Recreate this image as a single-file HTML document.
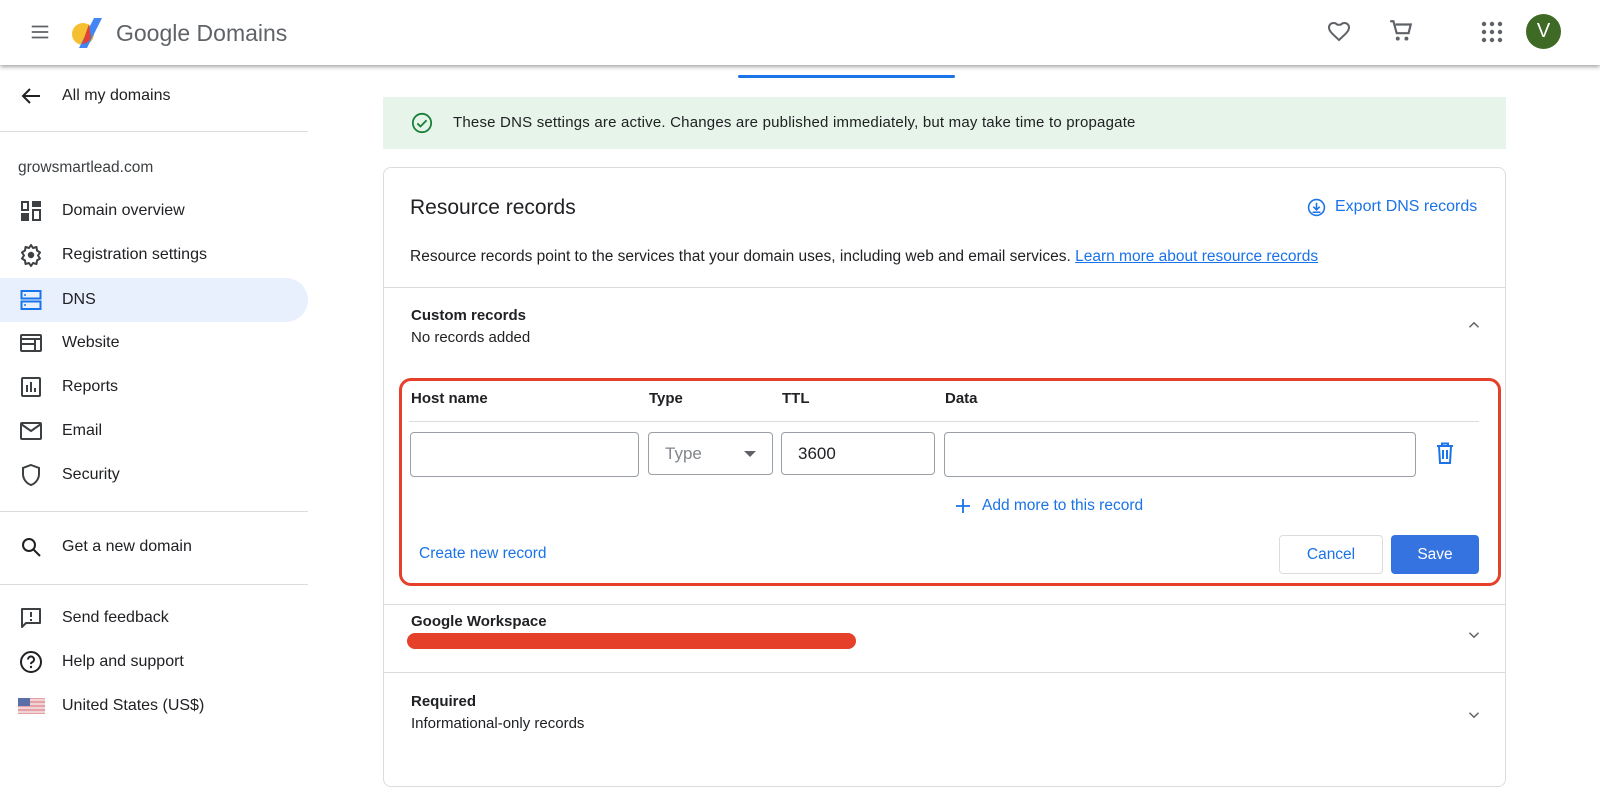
<!DOCTYPE html>
<html><head><meta charset="utf-8"><style>
*{box-sizing:border-box;margin:0;padding:0}
body{width:1600px;height:755px;overflow:hidden;background:#fff;font-family:"Liberation Sans",Arial,sans-serif;color:#202124;position:relative}
.abs{position:absolute}
.top{left:0;top:0;width:1600px;height:65px;background:#fff;box-shadow:0 2px 4px rgba(0,0,0,.35);z-index:5}
.nav{left:0;width:308px;height:44px;display:flex;align-items:center;font-size:16px;color:#202124}
.nav svg{position:absolute;left:19px}
.nav span{position:absolute;left:62px}
.hr{height:1px;background:#dadce0}
.blue{color:#1a73e8}
.inp{position:absolute;top:432px;height:45px;border:1px solid #9aa0a6;border-radius:4px;font-size:17px;display:flex;align-items:center;padding-left:16px}
.th{position:absolute;top:390px;font-size:15px;font-weight:bold}
.sec{font-size:15px;font-weight:bold;position:absolute;left:411px}
.sub{font-size:15px;position:absolute;left:411px}
</style></head><body>
<div class="abs top">
  <svg class="abs" style="left:29px;top:21px" width="22" height="22" viewBox="0 0 24 24"><path d="M3 6h18M3 12h18M3 18h18" stroke="#5f6368" stroke-width="2"/></svg>
  <svg class="abs" style="left:70px;top:16px" width="38" height="34" viewBox="0 0 38 34"><circle cx="13" cy="18" r="11" fill="#f6bf32"/><path d="M24 2h8L17 32H9z" fill="#4285f4"/><path d="M19 8L12 28a11 11 0 0 0 9-6z" fill="#db4437"/></svg>
  <div class="abs" style="left:116px;top:20px;font-size:23px;color:#5f6368">Google Domains</div>
  <svg class="abs" style="left:1326px;top:20px" width="26" height="24" viewBox="0 0 24 24"><path d="M12 20l-1.4-1.3C5.4 14 2 11 2 7.5 2 4.9 4 3 6.5 3c1.5 0 3 .7 3.9 1.8h3.2C14.5 3.7 16 3 17.5 3 20 3 22 4.9 22 7.5c0 3.5-3.4 6.5-8.6 11.2z" fill="none" stroke="#5f6368" stroke-width="2"/></svg>
  <svg class="abs" style="left:1388px;top:18px" width="26" height="26" viewBox="0 0 24 24"><path d="M2 3h3l3 11h11l2-8H7" fill="none" stroke="#5f6368" stroke-width="2"/><circle cx="9" cy="19" r="1.8" fill="#5f6368"/><circle cx="17" cy="19" r="1.8" fill="#5f6368"/></svg>
  <svg class="abs" style="left:1481px;top:21px" width="22" height="22" viewBox="0 0 22 22" fill="#5f6368"><circle cx="3" cy="3" r="2.2"/><circle cx="11" cy="3" r="2.2"/><circle cx="19" cy="3" r="2.2"/><circle cx="3" cy="11" r="2.2"/><circle cx="11" cy="11" r="2.2"/><circle cx="19" cy="11" r="2.2"/><circle cx="3" cy="19" r="2.2"/><circle cx="11" cy="19" r="2.2"/><circle cx="19" cy="19" r="2.2"/></svg>
  <div class="abs" style="left:1526px;top:14px;width:35px;height:35px;border-radius:50%;background:#3f6a25;color:#fff;font-size:20px;text-align:center;line-height:35px">V</div>
</div>

<div class="abs nav" style="top:74px"><svg width="24" height="24" viewBox="0 0 24 24"><path d="M21 12H4M11 5l-7 7 7 7" fill="none" stroke="#202124" stroke-width="2"/></svg><span>All my domains</span></div>
<div class="abs hr" style="left:0;top:131px;width:308px"></div>
<div class="abs" style="left:18px;top:159px;font-size:15.5px;color:#3c4043">growsmartlead.com</div>
<div class="abs nav" style="top:189px"><svg width="24" height="24" viewBox="0 0 24 24" fill="#3c4043"><path d="M2 2h8v10H2zM4 4v6h4V4zM13 2h9v6h-9zM2 14h8v8H2zM13 10h9v12h-9zM15 12v8h5v-8z"/></svg><span>Domain overview</span></div>
<div class="abs nav" style="top:233px"><svg width="24" height="24" viewBox="0 0 24 24"><circle cx="12" cy="12" r="3.2" fill="#3c4043"/><path d="M12 2l2 3 3.5-1 .5 3.5 3 2-2 3 2 3-3 2-.5 3.5-3.5-1-2 3-2-3-3.5 1L6 17.5l-3-2 2-3-2-3 3-2L6.5 4 10 5z" fill="none" stroke="#3c4043" stroke-width="2" stroke-linejoin="round"/></svg><span>Registration settings</span></div>
<div class="abs" style="left:0;top:278px;width:308px;height:44px;background:#e8f0fe;border-radius:0 22px 22px 0"></div>
<div class="abs nav" style="top:278px"><svg width="24" height="24" viewBox="0 0 24 24"><rect x="2.5" y="3" width="19" height="7.5" fill="none" stroke="#1a73e8" stroke-width="2"/><rect x="2.5" y="13.5" width="19" height="7.5" fill="none" stroke="#1a73e8" stroke-width="2"/><circle cx="6" cy="7" r="1" fill="#1a73e8"/><circle cx="6" cy="17" r="1" fill="#1a73e8"/></svg><span>DNS</span></div>
<div class="abs nav" style="top:321px"><svg width="24" height="24" viewBox="0 0 24 24"><rect x="2" y="4" width="20" height="16" rx="1" fill="none" stroke="#3c4043" stroke-width="2"/><path d="M2 8h20M16 8v12M3 13h13" stroke="#3c4043" stroke-width="2" fill="none"/></svg><span>Website</span></div>
<div class="abs nav" style="top:365px"><svg width="24" height="24" viewBox="0 0 24 24"><rect x="3" y="3" width="18" height="18" rx="1" fill="none" stroke="#3c4043" stroke-width="2"/><path d="M8 10v7M12 7v10M16 13v4" stroke="#3c4043" stroke-width="2"/></svg><span>Reports</span></div>
<div class="abs nav" style="top:409px"><svg width="24" height="24" viewBox="0 0 24 24"><rect x="2" y="4" width="20" height="16" rx="1" fill="none" stroke="#3c4043" stroke-width="2"/><path d="M2 5l10 7 10-7" stroke="#3c4043" stroke-width="2" fill="none"/></svg><span>Email</span></div>
<div class="abs nav" style="top:453px"><svg width="24" height="24" viewBox="0 0 24 24"><path d="M12 2l8 3v6c0 5-3.5 9.5-8 11-4.5-1.5-8-6-8-11V5z" fill="none" stroke="#3c4043" stroke-width="2"/></svg><span>Security</span></div>
<div class="abs hr" style="left:0;top:511px;width:308px"></div>
<div class="abs nav" style="top:525px"><svg width="24" height="24" viewBox="0 0 24 24"><circle cx="10" cy="10" r="6" fill="none" stroke="#202124" stroke-width="2"/><path d="M14.5 14.5L21 21" stroke="#202124" stroke-width="2"/></svg><span>Get a new domain</span></div>
<div class="abs hr" style="left:0;top:584px;width:308px"></div>
<div class="abs nav" style="top:596px"><svg width="24" height="24" viewBox="0 0 24 24"><path d="M3 3h18v14H7l-4 4z" fill="none" stroke="#3c4043" stroke-width="2" stroke-linejoin="round"/><path d="M12 6v5M12 13v2" stroke="#3c4043" stroke-width="2"/></svg><span>Send feedback</span></div>
<div class="abs nav" style="top:640px"><svg width="24" height="24" viewBox="0 0 24 24"><circle cx="12" cy="12" r="10" fill="none" stroke="#202124" stroke-width="2"/><path d="M9 9.5a3 3 0 1 1 4 2.8c-.8.4-1 1-1 1.8" fill="none" stroke="#202124" stroke-width="2"/><circle cx="12" cy="17" r="1.2" fill="#202124"/></svg><span>Help and support</span></div>
<div class="abs nav" style="top:684px"><svg width="27" height="16" viewBox="0 0 27 16" style="left:18px"><rect width="27" height="16" fill="#e7a0a6"/><path d="M0 2h27M0 6h27M0 10h27M0 14h27" stroke="#f4f4f4" stroke-width="1.3"/><rect width="12" height="8" fill="#5a6ea8"/></svg><span>United States (US$)</span></div>

<div class="abs" style="left:738px;top:75px;width:217px;height:3px;background:#1a73e8;border-radius:2px"></div>
<div class="abs" style="left:383px;top:97px;width:1123px;height:52px;background:#e7f4ea"></div>
<svg class="abs" style="left:411px;top:112px" width="22" height="22" viewBox="0 0 24 24"><circle cx="12" cy="12" r="10" fill="none" stroke="#188038" stroke-width="2"/><path d="M7 12.5l3.3 3.3L17 9" fill="none" stroke="#188038" stroke-width="2"/></svg>
<div class="abs" style="left:453px;top:114px;font-size:15px;color:#202124;letter-spacing:.2px">These DNS settings are active. Changes are published immediately, but may take time to propagate</div>

<div class="abs" style="left:383px;top:167px;width:1123px;height:620px;border:1px solid #dadce0;border-radius:8px"></div>
<div class="abs" style="left:410px;top:196px;font-size:21px;color:#202124">Resource records</div>
<svg class="abs" style="left:1307px;top:198px" width="19" height="19" viewBox="0 0 24 24"><circle cx="12" cy="12" r="10" fill="none" stroke="#1a73e8" stroke-width="2"/><path d="M12 6v8M8 11l4 4 4-4M7 18h10" fill="none" stroke="#1a73e8" stroke-width="2"/></svg>
<div class="abs blue" style="left:1335px;top:198px;font-size:16px">Export DNS records</div>
<div class="abs" style="left:410px;top:248px;font-size:15.5px">Resource records point to the services that your domain uses, including web and email services. <span class="blue" style="text-decoration:underline">Learn more about resource records</span></div>
<div class="abs hr" style="left:384px;top:287px;width:1121px"></div>

<div class="sec" style="top:307px">Custom records</div>
<div class="sub" style="top:329px">No records added</div>
<svg class="abs" style="left:1465px;top:316px" width="18" height="18" viewBox="0 0 24 24"><path d="M6 15l6-6 6 6" fill="none" stroke="#5f6368" stroke-width="2"/></svg>

<div class="abs" style="left:399px;top:378px;width:1102px;height:208px;border:3px solid #e5402a;border-radius:12px"></div>
<div class="th" style="left:411px">Host name</div>
<div class="th" style="left:649px">Type</div>
<div class="th" style="left:782px">TTL</div>
<div class="th" style="left:945px">Data</div>
<div class="abs" style="left:409px;top:421px;width:1070px;height:1px;background:#dadce0"></div>
<div class="inp" style="left:410px;width:229px"></div>
<div class="inp" style="left:648px;width:125px;top:432px;height:43px;color:#80868b">Type<svg style="position:absolute;right:16px;top:18px" width="12" height="7" viewBox="0 0 12 7"><path d="M0 0h12L6 6z" fill="#5f6368"/></svg></div>
<div class="inp" style="left:781px;width:154px;height:43px">3600</div>
<div class="inp" style="left:944px;width:472px"></div>
<svg class="abs" style="left:1434px;top:441px" width="22" height="24" viewBox="0 0 22 24"><path d="M3 5h16M8 5V2.5h6V5M5 5l1 17h10l1-17M9 9v9M13 9v9" fill="none" stroke="#1a73e8" stroke-width="2"/></svg>
<svg class="abs" style="left:955px;top:498px" width="16" height="16" viewBox="0 0 16 16"><path d="M8 1v14M1 8h14" stroke="#1a73e8" stroke-width="1.8"/></svg>
<div class="abs blue" style="left:982px;top:497px;font-size:15.5px">Add more to this record</div>
<div class="abs blue" style="left:419px;top:545px;font-size:15.5px">Create new record</div>
<div class="abs blue" style="left:1279px;top:535px;width:104px;height:39px;border:1px solid #dadce0;border-radius:4px;font-size:15.5px;text-align:center;line-height:37px">Cancel</div>
<div class="abs" style="left:1391px;top:535px;width:88px;height:39px;background:#3574e0;color:#fff;border-radius:4px;font-size:15.5px;text-align:center;line-height:39px">Save</div>

<div class="abs hr" style="left:384px;top:604px;width:1121px"></div>
<div class="sec" style="top:613px">Google Workspace</div>
<div class="abs" style="left:407px;top:633px;width:449px;height:16px;background:#e5402a;border-radius:8px"></div>
<svg class="abs" style="left:1465px;top:626px" width="18" height="18" viewBox="0 0 24 24"><path d="M6 9l6 6 6-6" fill="none" stroke="#5f6368" stroke-width="2"/></svg>
<div class="abs hr" style="left:384px;top:672px;width:1121px"></div>
<div class="sec" style="top:693px">Required</div>
<div class="sub" style="top:715px">Informational-only records</div>
<svg class="abs" style="left:1465px;top:706px" width="18" height="18" viewBox="0 0 24 24"><path d="M6 9l6 6 6-6" fill="none" stroke="#5f6368" stroke-width="2"/></svg>
</body></html>
